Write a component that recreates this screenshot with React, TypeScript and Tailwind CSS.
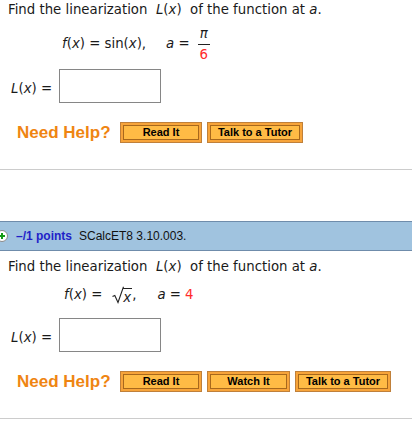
import React from "react";

function HelpButton({ label, width }: { label: string; width: string }) {
  return (
    <span
      className={`${width} h-[21px] flex items-stretch border border-[#c0803a] bg-[#f7a43a] p-[2px]`}
    >
      <span className="flex-1 flex items-center justify-center border border-[#a8681c] bg-[#ffbb45] font-['Liberation_Sans',Arial,sans-serif] font-bold text-[11px] text-black leading-none">
        {label}
      </span>
    </span>
  );
}

function NeedHelp({ buttons }: { buttons: { label: string; width: string }[] }) {
  return (
    <div className="flex items-center h-[21px] pl-[17px]">
      <span className="w-[103px] font-['Liberation_Sans',Arial,sans-serif] font-bold text-[17px] text-[#ef8512] leading-none">
        Need Help?
      </span>
      <div className="flex gap-[5px]">
        {buttons.map((b) => (
          <HelpButton key={b.label} label={b.label} width={b.width} />
        ))}
      </div>
    </div>
  );
}

function Prompt() {
  return (
    <p className="h-[20px] flex items-center pl-2 leading-none whitespace-pre">
      Find the linearization  <i>L</i>(<i>x</i>)  of the function at <i>a</i>.
    </p>
  );
}

function AnswerRow() {
  return (
    <div className="flex items-center h-[34px] pl-[11px]">
      <span className="mt-[6px] w-[48px] leading-none whitespace-pre">
        <i>L</i>(<i>x</i>) =
      </span>
      <span className="w-[102px] h-[34px] border border-[#868686] bg-white" />
    </div>
  );
}

export default function App() {
  return (
    <div className="w-[412px] h-[429px] bg-white overflow-hidden font-['DejaVu_Sans',Verdana,sans-serif] text-[13.3px] text-[#1a1a1a]">
      {/* First question (tail) */}
      <Prompt />

      <div className="mt-[6px] h-[36px] flex items-center pl-[62px] leading-none">
        <span className="whitespace-pre">
          <i>f</i>(<i>x</i>) = sin(<i>x</i>),
        </span>
        <span className="ml-[20px] whitespace-pre">
          <i>a</i> =
        </span>
        <span className="inline-flex flex-col items-center ml-[8px]">
          <i className="px-[2px] pb-[3px]">π</i>
          <span className="w-[12px] border-t border-[#222]" />
          <span className="pt-[3px] text-[#ff2a2a]">6</span>
        </span>
      </div>

      <div className="mt-[7px]">
        <AnswerRow />
      </div>

      <div className="mt-[19px]">
        <NeedHelp
          buttons={[
            { label: "Read It", width: "w-[82px]" },
            { label: "Talk to a Tutor", width: "w-[96px]" },
          ]}
        />
      </div>
      <div className="h-[27px] border-b border-[#cccccc]" />

      {/* Second question */}
      <div className="mt-[51px] h-[30px] flex items-center border-y border-[#6f8cab] bg-[#a0c3df] font-['Liberation_Sans',Arial,sans-serif] text-[12px]">
        <span className="-ml-[4px] w-[12px] h-[12px] rounded-full border border-[#8a8a8a] bg-white flex items-center justify-center">
          <svg width="8" height="8" viewBox="0 0 8 8">
            <path d="M4 1v6M1 4h6" stroke="#159b15" strokeWidth="2" />
          </svg>
        </span>
        <span className="ml-[8px] font-bold text-[#1f1fc8]">–/1 points</span>
        <span className="ml-[7px] text-[#111]">SCalcET8 3.10.003.</span>
      </div>

      <div className="mt-[6px]">
        <Prompt />
      </div>

      <div className="mt-[8px] h-[20px] flex items-center pl-[64px] leading-none">
        <span className="whitespace-pre">
          <i>f</i>(<i>x</i>) =
        </span>
        <span className="inline-flex items-end ml-[10px]">
          <svg width="12" height="18" viewBox="0 0 12 18" className="-mr-[1px]">
            <path d="M0.5 10.5 L2.8 9.5 L6 16.5 L11.5 0.8" stroke="#222" strokeWidth="1.1" fill="none" />
          </svg>
          <span className="border-t border-[#222] pt-[2px] pr-[1px]">
            <i>x</i>
          </span>
        </span>
        <span>,</span>
        <span className="ml-[21px] whitespace-pre">
          <i>a</i> =
        </span>
        <span className="ml-[4px] text-[#ff2a2a]">4</span>
      </div>

      <div className="mt-[13px]">
        <AnswerRow />
      </div>

      <div className="mt-[19px]">
        <NeedHelp
          buttons={[
            { label: "Read It", width: "w-[82px]" },
            { label: "Watch It", width: "w-[83px]" },
            { label: "Talk to a Tutor", width: "w-[96px]" },
          ]}
        />
      </div>
      <div className="h-[27px] border-b border-[#cccccc]" />
    </div>
  );
}
